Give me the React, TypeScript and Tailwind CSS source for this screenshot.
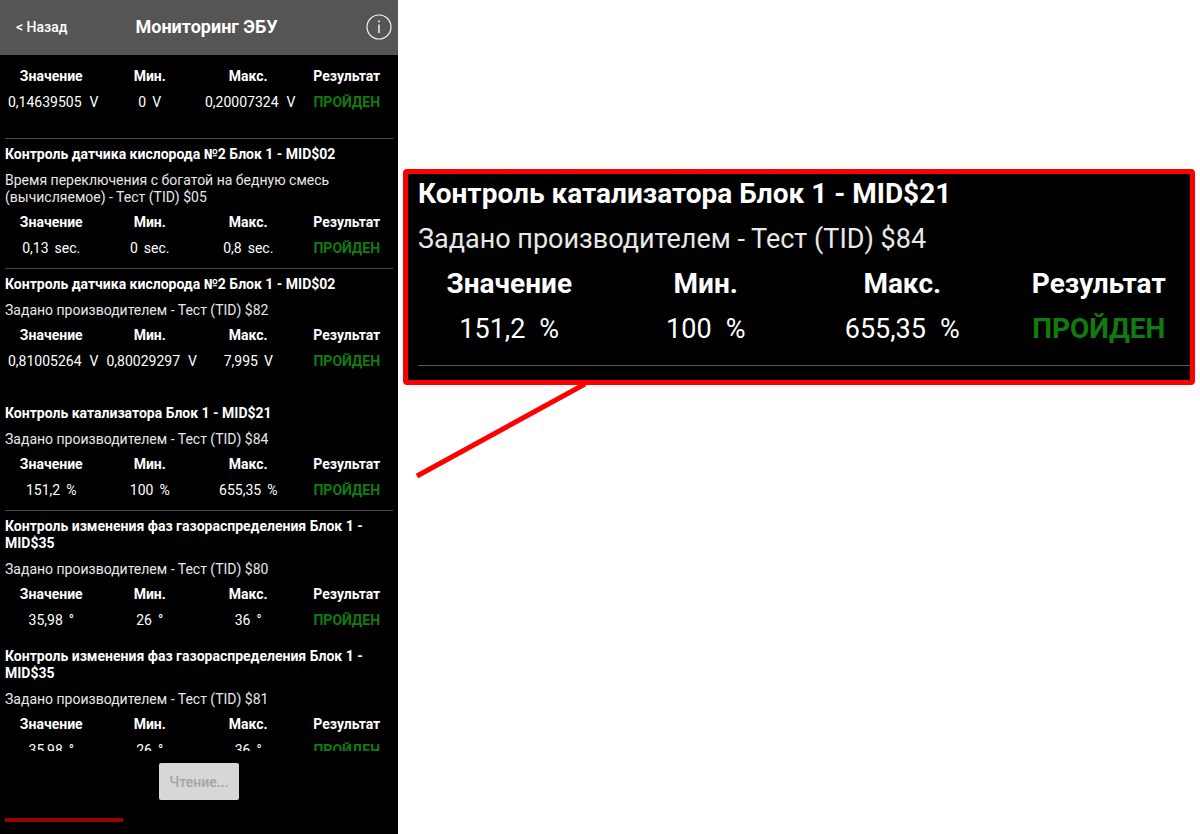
import clsx from "clsx";

type Reading = {
  value: string;
  wide?: boolean;
};

type TestResult = {
  id: string;
  title?: string;
  description?: string;
  unit: string;
  readings: Reading[];
  tall?: boolean;
  divider?: boolean;
};

const columns = ["Значение", "Мин.", "Макс.", "Результат"];

const results: TestResult[] = [
  {
    id: "o2-top",
    unit: "V",
    readings: [{ value: "0,14639505", wide: true }, { value: "0" }, { value: "0,20007324", wide: true }],
    tall: true,
    divider: true,
  },
  {
    id: "o2-05",
    title: "Контроль датчика кислорода №2 Блок 1 - MID$02",
    description: "Время переключения с богатой на бедную смесь (вычисляемое) - Тест (TID) $05",
    unit: "sec.",
    readings: [{ value: "0,13" }, { value: "0" }, { value: "0,8" }],
    divider: true,
  },
  {
    id: "o2-82",
    title: "Контроль датчика кислорода №2 Блок 1 - MID$02",
    description: "Задано производителем - Тест (TID) $82",
    unit: "V",
    readings: [{ value: "0,81005264", wide: true }, { value: "0,80029297", wide: true }, { value: "7,995" }],
    tall: true,
  },
  {
    id: "cat-84",
    title: "Контроль катализатора Блок 1 - MID$21",
    description: "Задано производителем - Тест (TID) $84",
    unit: "%",
    readings: [{ value: "151,2" }, { value: "100" }, { value: "655,35" }],
    divider: true,
  },
  {
    id: "vvt-80",
    title: "Контроль изменения фаз газораспределения Блок 1 - MID$35",
    description: "Задано производителем - Тест (TID) $80",
    unit: "°",
    readings: [{ value: "35,98" }, { value: "26" }, { value: "36" }],
  },
  {
    id: "vvt-81",
    title: "Контроль изменения фаз газораспределения Блок 1 - MID$35",
    description: "Задано производителем - Тест (TID) $81",
    unit: "°",
    readings: [{ value: "35,98" }, { value: "26" }, { value: "36" }],
  },
];

const progress = 30.5;

const ResultTable = ({ result, large }: { result: TestResult; large?: boolean }) => (
  <table className="w-full table-fixed text-center">
    <thead>
      <tr>
        {columns.map((column) => (
          <th
            key={column}
            scope="col"
            className={clsx("p-0 font-bold", large ? "pb-[13px] text-[28px] leading-8" : "pb-[9px]")}
          >
            {column}
          </th>
        ))}
      </tr>
    </thead>
    <tbody>
      <tr className="whitespace-nowrap">
        {result.readings.map((reading, i) => (
          <td key={i} className={clsx("py-0 pr-0", reading.wide ? "pl-1" : "pl-0")}>
            {reading.value}
            <span className={large ? "ml-[14px]" : reading.wide ? "ml-2" : "ml-1.5"}>{result.unit}</span>
          </td>
        ))}
        <td className={clsx("p-0 font-bold text-[#107c10]", large && "text-[28px] leading-8")}>ПРОЙДЕН</td>
      </tr>
    </tbody>
  </table>
);

const ResultSection = ({ result }: { result: TestResult }) => (
  <section className="text-sm leading-[17px]">
    {result.title && <h2 className="mb-[9px] px-[5px] font-bold">{result.title}</h2>}
    {result.description && <p className="mb-2 px-[5px] text-[#e8e8e8]">{result.description}</p>}
    <div className="px-0.5">
      <ResultTable result={result} />
    </div>
    <div
      className={clsx(
        "mx-[5px] mb-[7px] border-b",
        result.tall ? "pt-[27px]" : "pt-[11px]",
        result.divider ? "border-[#4a4a4a]" : "border-transparent"
      )}
    />
  </section>
);

const MonitorHeader = () => (
  <header className="flex h-[55px] shrink-0 items-center bg-[#555555] pb-0.5">
    <button type="button" className="w-[85px] pl-4 text-left text-sm font-medium">
      &lt; Назад
    </button>
    <h1 className="flex-1 text-center text-lg font-bold">Мониторинг ЭБУ</h1>
    <div className="flex w-[70px] justify-end pr-1.5">
      <button type="button" aria-label="Информация">
        <svg width="26" height="26" viewBox="0 0 26 26" fill="none" stroke="#f2f2f2">
          <circle cx="13" cy="13" r="12" strokeWidth="1.2" />
          <path d="M13 10.5V19" strokeWidth="1.5" />
          <path d="M13 6.5V8.3" strokeWidth="1.7" />
        </svg>
      </button>
    </div>
  </header>
);

const Callout = ({ result }: { result: TestResult }) => (
  <section className="overflow-hidden rounded border-5 border-[#ff0000] bg-black pt-1 pb-3.5 text-[27px] leading-8 text-white">
    <h2 className="mb-[13px] pl-2.5 text-[28px] leading-8 font-bold">{result.title}</h2>
    <p className="mb-[13px] pl-2.5 text-[#e8e8e8]">{result.description}</p>
    <div className="ml-[3px] -mr-[7px]">
      <ResultTable result={result} large />
    </div>
    <div className="ml-2.5 border-b border-[#5a5a5a] pt-5" />
  </section>
);

export default function App() {
  const highlighted = results.find((result) => result.id === "cat-84")!;

  return (
    <div className="grid h-screen grid-cols-[398fr_802fr] bg-white font-['Roboto',sans-serif]">
      <div className="flex min-h-0 flex-col bg-black text-white">
        <MonitorHeader />
        <main className="min-h-0 flex-1 overflow-hidden pt-[13px]">
          {results.map((result) => (
            <ResultSection key={result.id} result={result} />
          ))}
        </main>
        <footer className="flex shrink-0 flex-col items-center px-[5px] pt-3 pb-3">
          <button
            type="button"
            disabled
            className="h-[37px] rounded-xs bg-[#d6d7d7] px-[11px] text-sm font-medium text-[#a3a4a4]"
          >
            Чтение...
          </button>
          <div
            role="progressbar"
            aria-label="Чтение"
            aria-valuenow={progress}
            className="mt-[18px] h-1 w-full"
          >
            <div className="h-full bg-[#990000]" style={{ width: `${progress}%` }} />
          </div>
        </footer>
      </div>

      <div className="min-w-0 px-[5px] pt-[169px]">
        <Callout result={highlighted} />
        <svg className="ml-3" width="180" height="96" viewBox="0 0 180 96" fill="none">
          <path d="M2 91L170 -1" stroke="#ff0000" strokeWidth="5" />
        </svg>
      </div>
    </div>
  );
}
